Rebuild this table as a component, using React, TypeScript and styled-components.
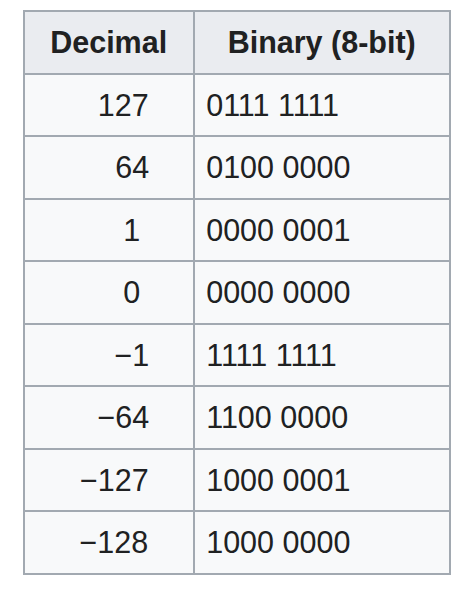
import React from "react";
import styled, { createGlobalStyle } from "styled-components";

const GlobalStyle = createGlobalStyle`
  html, body {
    margin: 0;
    padding: 0;
    background: #ffffff;
  }
  body {
    font-family: "Liberation Sans", Arial, sans-serif;
    color: #202122;
  }
`;

const Page = styled.div`
  padding: 10.3px 0 0 22.7px;
`;

const Table = styled.table`
  border-collapse: collapse;
  table-layout: fixed;
  background: #f8f9fa;
  color: #202122;
  font-size: 30.5px;
  border: 2px solid #a2a9b1;
`;

const HeadCell = styled.th<{ $w: number }>`
  width: ${(p) => p.$w}px;
  background: #eaecf0;
  border: 2px solid #a2a9b1;
  padding: 6px 12px;
  line-height: 48.5px;
  font-weight: bold;
  text-align: center;
  white-space: nowrap;
`;

const DecimalCell = styled.td<{ $pr: number }>`
  border: 2px solid #a2a9b1;
  padding: 6px ${(p) => p.$pr}px 6px 12px;
  line-height: 48.5px;
  text-align: right;
  white-space: nowrap;
`;

const BinaryCell = styled.td`
  border: 2px solid #a2a9b1;
  padding: 6px 12px 6px 11.5px;
  line-height: 48.5px;
  text-align: left;
  white-space: nowrap;
`;

const rows: { dec: string; bin: string; pr: number }[] = [
  { dec: "127", bin: "0111 1111", pr: 44 },
  { dec: "64", bin: "0100 0000", pr: 43.5 },
  { dec: "1", bin: "0000 0001", pr: 52.5 },
  { dec: "0", bin: "0000 0000", pr: 52.5 },
  { dec: "\u22121", bin: "1111 1111", pr: 43.5 },
  { dec: "\u221264", bin: "1100 0000", pr: 43.5 },
  { dec: "\u2212127", bin: "1000 0001", pr: 44 },
  { dec: "\u2212128", bin: "1000 0000", pr: 44.5 },
];

export default function App() {
  return (
    <>
      <GlobalStyle />
      <Page>
        <Table>
          <thead>
            <tr>
              <HeadCell $w={144}>Decimal</HeadCell>
              <HeadCell $w={230}>Binary (8-bit)</HeadCell>
            </tr>
          </thead>
          <tbody>
            {rows.map((r) => (
              <tr key={r.dec}>
                <DecimalCell $pr={r.pr}>{r.dec}</DecimalCell>
                <BinaryCell>{r.bin}</BinaryCell>
              </tr>
            ))}
          </tbody>
        </Table>
      </Page>
    </>
  );
}
